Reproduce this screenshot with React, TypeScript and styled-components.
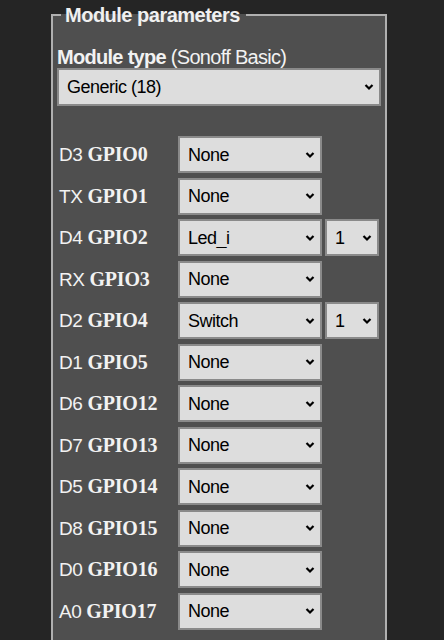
import React from 'react';
import styled, { createGlobalStyle } from 'styled-components';

const GlobalStyles = createGlobalStyle`
  html, body {
    margin: 0;
    padding: 0;
    background: #252525;
  }
  body {
    font-family: 'Liberation Sans', Arial, sans-serif;
    color: #eaeaea;
  }
`;

const Page = styled.div`
  padding: 4px 0 0 51px;
`;

const Fieldset = styled.fieldset`
  width: 324px;
  margin: 0;
  padding: 0 4px 12px 4px;
  border: 2px solid #b0b0b0;
  background: #4f4f4f;
  min-inline-size: auto;
`;

const Legend = styled.legend`
  margin-left: 4px;
  padding: 0 6px 0 4px;
  font-size: 20px;
  font-weight: 700;
  letter-spacing: -0.5px;
  color: #f0f0f0;
  line-height: 22px;
`;

const TypeLabel = styled.div`
  margin-top: 20px;
  font-size: 20px;
  line-height: 22px;
  letter-spacing: -0.7px;
  color: #f2f2f2;

  b {
    font-weight: 700;
  }
`;

const SelectWrap = styled.div<{ $w: number }>`
  position: relative;
  width: ${(p) => p.$w}px;
  flex: 0 0 auto;
`;

const Select = styled.select<{ $h: number }>`
  display: block;
  appearance: none;
  -webkit-appearance: none;
  width: 100%;
  height: ${(p) => p.$h}px;
  box-sizing: border-box;
  background: #dddddd;
  border: 2px solid #8a8a8a;
  border-radius: 0;
  padding: 0 24px 0 8px;
  font-family: 'Liberation Sans', Arial, sans-serif;
  font-size: 18px;
  letter-spacing: -0.5px;
  color: #000;
  outline: none;
`;

const Chevron = styled.svg`
  position: absolute;
  right: 7px;
  top: 50%;
  margin-top: -4px;
  width: 10px;
  height: 8px;
  pointer-events: none;
`;

const Spacer = styled.div`
  height: 30px;
`;

const Rows = styled.div`
  display: flex;
  flex-direction: column;
  gap: 4.5px;
`;

const Row = styled.div`
  display: flex;
  align-items: center;
  gap: 3px;
`;

const PinLabel = styled.div`
  flex: 0 0 118px;
  box-sizing: border-box;
  padding-left: 2px;
  font-size: 19px;
  letter-spacing: -0.4px;
  white-space: nowrap;
  color: #f2f2f2;

  b {
    font-family: 'Liberation Serif', 'Times New Roman', serif;
    font-weight: 700;
    font-size: 20px;
    letter-spacing: -0.2px;
  }
`;

const Dropdown = ({ value, w, h }: { value: string; w: number; h: number }) => (
  <SelectWrap $w={w}>
    <Select $h={h} defaultValue={value}>
      <option>{value}</option>
    </Select>
    <Chevron viewBox="0 0 10 8">
      <path d="M1.5 2 L5 5.5 L8.5 2" fill="none" stroke="#000" strokeWidth="2.2" />
    </Chevron>
  </SelectWrap>
);

const pins: [string, string, string, string?][] = [
  ['D3', 'GPIO0', 'None'],
  ['TX', 'GPIO1', 'None'],
  ['D4', 'GPIO2', 'Led_i', '1'],
  ['RX', 'GPIO3', 'None'],
  ['D2', 'GPIO4', 'Switch', '1'],
  ['D1', 'GPIO5', 'None'],
  ['D6', 'GPIO12', 'None'],
  ['D7', 'GPIO13', 'None'],
  ['D5', 'GPIO14', 'None'],
  ['D8', 'GPIO15', 'None'],
  ['D0', 'GPIO16', 'None'],
  ['A0', 'GPIO17', 'None'],
];

export default function App() {
  return (
    <>
      <GlobalStyles />
      <Page>
        <Fieldset>
          <Legend>Module parameters</Legend>
          <TypeLabel>
            <b>Module type</b> (Sonoff Basic)
          </TypeLabel>
          <Dropdown value="Generic (18)" w={324} h={38} />
          <Spacer />
          <Rows>
            {pins.map(([d, g, v, n]) => (
              <Row key={g}>
                <PinLabel>
                  {d} <b>{g}</b>
                </PinLabel>
                <Dropdown value={v} w={144} h={37} />
                {n && <Dropdown value={n} w={54} h={37} />}
              </Row>
            ))}
          </Rows>
        </Fieldset>
      </Page>
    </>
  );
}
